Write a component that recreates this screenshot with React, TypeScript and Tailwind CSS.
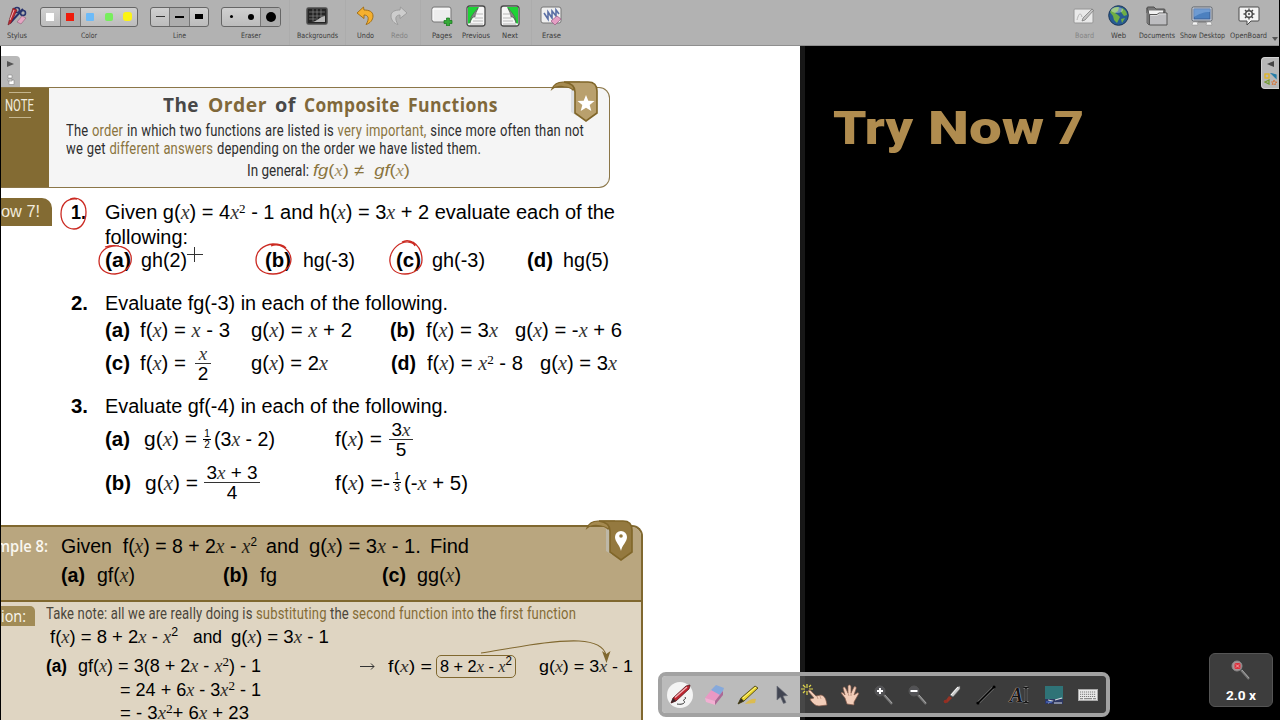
import { useLayoutEffect, useRef, useState } from "react";
import type { ReactNode } from "react";

type BoxProps = { className?: string; children?: ReactNode };

// Stretches one line of text to the width of its box
function Fit({ className = "", children }: BoxProps) {
  const box = useRef<HTMLSpanElement>(null);
  const text = useRef<HTMLSpanElement>(null);
  const [scale, setScale] = useState(1);

  useLayoutEffect(() => {
    if (box.current && text.current && text.current.offsetWidth) {
      setScale(box.current.clientWidth / text.current.getBoundingClientRect().width);
    }
  }, []);

  return (
    <span ref={box} className={`block shrink-0 whitespace-pre ${className}`}>
      <span ref={text} className="inline-block origin-left" style={{ transform: `scaleX(${scale})` }}>
        {children}
      </span>
    </span>
  );
}

function X() {
  return <i className="font-['Liberation_Serif',serif] italic opacity-80">x</i>;
}

function Sq({ bold = false }: { bold?: boolean }) {
  return (
    <span className={bold ? "relative -top-[7px] text-[12px]" : "relative -top-[6px] font-['Liberation_Serif',serif] text-[13px]"}>
      2
    </span>
  );
}

function Row({ className = "", children }: BoxProps) {
  return <div className={`flex items-center ${className}`}>{children}</div>;
}

function Frac({ className = "", top, bottom }: { className?: string; top: ReactNode; bottom: ReactNode }) {
  return (
    <span className={`flex shrink-0 flex-col items-center text-[19px] leading-[19px] ${className}`}>
      <span className="whitespace-pre">{top}</span>
      <span className="h-px w-full bg-[#333]" />
      <span>{bottom}</span>
    </span>
  );
}

function SmallFrac({ className = "", bottom }: { className?: string; bottom: string }) {
  return (
    <span className={`flex w-[8px] shrink-0 flex-col items-center text-[10px] leading-[10px] ${className}`}>
      <span>1</span>
      <span className="h-px w-full bg-black" />
      <span>{bottom}</span>
    </span>
  );
}

function Ribbon({ className = "", fill = "#b9a06d", children }: BoxProps & { fill?: string }) {
  return (
    <svg className={`absolute ${className}`} width="50" height="44" viewBox="0 0 50 44">
      <path d="M21 10v22l6 4V10z" fill="#c3cad0" opacity=".5" />
      <path d="M2 9C4 4 8 2 13 2h16l-6 8c-4-4-16-5-21-1z" fill="#a58a50" stroke="#806629" strokeWidth="1.200" />
      <path d="M14 2h24c6 0 9 3 9 9v22l-11 8-11-8V12c0-6-4-9-11-10z" fill={fill} stroke="#806629" strokeWidth="1.600" />
      {children}
    </svg>
  );
}

function Tool({ className = "", label, labelWidth, dim = false, children }: BoxProps & { label: string; labelWidth: string; dim?: boolean }) {
  return (
    <div className={`flex h-[45px] shrink-0 flex-col items-center ${className}`}>
      <div className="flex h-[31px] items-center justify-center">{children}</div>
      <Fit className={`text-[7.5px] leading-[9px] ${labelWidth} ${dim ? "text-[#858585]" : "text-[#3c3c3c]"}`}>{label}</Fit>
    </div>
  );
}

function Sep({ className = "" }: { className?: string }) {
  return <div className={`h-[45px] w-px shrink-0 bg-[#acacac] ${className}`} />;
}

const group = "mt-[2px] flex h-[20px] overflow-hidden rounded-[3px] border border-[#666] bg-linear-to-b from-[#d0d0d0] to-[#bcbcbc]";
const cell = "flex flex-1 items-center justify-center";

function PageIcon({ flip = false }: { flip?: boolean }) {
  return (
    <svg width="20" height="22" viewBox="0 0 20 22" className={flip ? "-scale-x-100" : ""}>
      <rect x="1" y="1" width="18" height="20" rx="2.5" fill="#f6f6f6" stroke="#4c4c4c" strokeWidth="1.3" />
      <path d="M2 2h11L3.500 18.500H2z" fill="#1ed336" />
      <path d="M10 9h7M9 13h8M7 16h10M4 19h13" stroke="#aaa" strokeWidth=".8" />
      <path d="M12 3c-3 4-8 8-8 15 1-5 2-6 5-6 0-3 2-6 3-9z" fill="#888" stroke="#555" strokeWidth=".6" />
    </svg>
  );
}

function UndoIcon({ redo = false }: { redo?: boolean }) {
  return (
    <svg width="18" height="20" viewBox="0 0 18 20" className={redo ? "-scale-x-100" : ""}>
      <path
        d="M7.500 1 1 7l7 5.500V9c4 0 6 3 2 9.500 4-1 7-4.500 7-8.500 0-4.500-4-6-9-6z"
        fill={redo ? "#cdcdcd" : "#f5b02e"}
        stroke={redo ? "#999" : "#9c6a14"}
        strokeWidth=".9"
        strokeLinejoin="round"
      />
    </svg>
  );
}

function Toolbar() {
  return (
    <header className="flex h-[46px] w-[1279px] border-b border-[#8f8f8f] bg-[#b2b2b2] font-['DejaVu_Sans',sans-serif]">
      <Tool className="w-[34px]" label="Stylus" labelWidth="w-[20px]">
        <svg width="20" height="20" viewBox="0 0 20 20">
          <path d="M3 17 16 3" stroke="#26306c" strokeWidth="2" />
          <circle cx="10" cy="4" r="2.500" fill="none" stroke="#29356f" strokeWidth="1.600" />
          <circle cx="16" cy="7" r="2.500" fill="none" stroke="#29356f" strokeWidth="1.600" />
          <path d="M6 2 10 4 4 17l-3 2 1-4z" fill="#bc2932" stroke="#6b1820" strokeWidth=".6" />
          <path d="m10 16 5-6 4 2-5 6z" fill="#e5a5c2" stroke="#8e6078" strokeWidth=".6" />
          <path d="M7 4 3 14" stroke="#efb8b8" />
        </svg>
      </Tool>
      <Tool className="ml-[6px] w-[98px]" label="Color" labelWidth="w-[16px]">
        <div className={`${group} w-[98px]`}>
          <div className={cell}><i className="size-[8px] bg-white" /></div>
          <div className={`${cell} border-x border-[#777] bg-[#adadad]`}><i className="size-[8px] bg-[#ef1c0c]" /></div>
          <div className={cell}><i className="size-[8px] rounded-[1px] bg-[#6dbbf8]" /></div>
          <div className={cell}><i className="size-[8px] rounded-[2px] bg-[#77ee5c]" /></div>
          <div className={cell}><i className="size-[9px] rounded-[3px] bg-[#fcf414]" /></div>
        </div>
      </Tool>
      <Tool className="ml-[12px] w-[59px]" label="Line" labelWidth="w-[13px]">
        <div className={`${group} w-[59px]`}>
          <div className={cell}><i className="h-px w-[9px] bg-[#333]" /></div>
          <div className={`${cell} border-x border-[#777] bg-[#adadad]`}><i className="h-[2px] w-[9px] bg-black" /></div>
          <div className={cell}><i className="h-[5px] w-[8px] bg-black" /></div>
        </div>
      </Tool>
      <Tool className="ml-[12px] w-[60px]" label="Eraser" labelWidth="w-[20px]">
        <div className={`${group} w-[60px]`}>
          <div className={cell}><i className="size-[3px] rounded-full bg-black" /></div>
          <div className={cell}><i className="size-[6px] rounded-full bg-black" /></div>
          <div className={`${cell} border-l border-[#777] bg-[#adadad]`}><i className="size-[10px] rounded-full bg-black" /></div>
        </div>
      </Tool>
      <Sep className="ml-[8px]" />
      <Tool className="ml-[2px] w-[50px]" label="Backgrounds" labelWidth="w-[41px]">
        <svg width="22" height="18" viewBox="0 0 22 18">
          <rect x="1" y="1" width="20" height="16" rx="1.500" fill="#242424" stroke="#4f4f4f" strokeWidth="1.500" />
          <path d="M3 5h16M3 9h16M3 12h7M7 2v12M11 2v11M15 2v8" stroke="#858585" strokeWidth=".7" />
          <path d="M5 15c6 0 8-5 14-6v6z" fill="#b6b6b6" />
        </svg>
      </Tool>
      <Sep className="ml-[3px]" />
      <Tool className="ml-[2px] w-[34px]" label="Undo" labelWidth="w-[17px]"><UndoIcon /></Tool>
      <Tool className="w-[34px]" label="Redo" labelWidth="w-[17px]" dim><UndoIcon redo /></Tool>
      <Sep className="ml-[4px]" />
      <Tool className="ml-[4px] w-[34px]" label="Pages" labelWidth="w-[20px]">
        <svg width="22" height="20" viewBox="0 0 22 20">
          <rect x="1" y="1" width="19" height="15" rx="2" fill="#ededed" stroke="#767676" />
          <path d="M2 14V3h17" stroke="#fff" fill="none" />
          <path d="M15.500 12h3v2.500H21v3h-2.500V20h-3v-2.500H13v-3h2.500z" fill="#35ab37" stroke="#14731a" strokeWidth=".7" />
        </svg>
      </Tool>
      <Tool className="w-[34px]" label="Previous" labelWidth="w-[28px]"><PageIcon /></Tool>
      <Tool className="w-[34px]" label="Next" labelWidth="w-[16px]"><PageIcon flip /></Tool>
      <Sep className="ml-[4px]" />
      <Tool className="ml-[2px] w-[34px]" label="Erase" labelWidth="w-[19px]">
        <svg width="22" height="20" viewBox="0 0 22 20">
          <rect x="1" y="1" width="20" height="16" rx="2" fill="#efefef" stroke="#767676" />
          <path d="m4 7 4 6 0-7 4 6V5l4 5V4l3 4" fill="none" stroke="#5a6fa5" strokeWidth="1.600" />
          <path d="m11 15 6-5 4 3-6 6z" fill="#e59fc4" stroke="#9a5a86" strokeWidth=".7" />
        </svg>
      </Tool>

      <Tool className="ml-auto w-[34px]" label="Board" labelWidth="w-[19px]" dim>
        <svg width="22" height="18" viewBox="0 0 22 18">
          <rect x="1" y="2" width="19" height="14" rx="1" fill="#e9e9e9" stroke="#969696" />
          <path d="M4 13c2-8 4-7 5-3" fill="none" stroke="#b3b3b3" />
          <path d="m9 14 1-3 9-9 1.500 1.500L12 13z" fill="#c4c4c4" stroke="#727272" strokeWidth=".7" />
        </svg>
      </Tool>
      <Tool className="w-[34px]" label="Web" labelWidth="w-[15px]">
        <svg width="21" height="21" viewBox="0 0 21 21">
          <circle cx="10.500" cy="10.500" r="9.800" fill="#275c93" stroke="#1c3759" />
          <path d="M2 7c2-4 5-5 9-5l-1 4-3 2 3 2 2 2-3 6-3-3-1-4zM14 3c4 2 5 5 5 7l-3 1-3-4zM13 14l4-1-3 5z" fill="#6fae45" />
          <ellipse cx="9" cy="5" rx="6" ry="3" fill="#fff" opacity=".35" />
        </svg>
      </Tool>
      <Tool className="w-[43px]" label="Documents" labelWidth="w-[36px]">
        <svg width="22" height="20" viewBox="0 0 22 20">
          <path d="M1 2q0-1 1-1h6l2 2h8q1 0 1 1v3H1z" fill="#777" stroke="#4f4f4f" />
          <path d="M3 4.500h14V8H3z" fill="#f2f2f2" />
          <path d="M1 2v15l2 2V8z" fill="#8b8b8b" stroke="#555" strokeWidth=".8" />
          <path d="M3.500 8.500H11l2-1.500h8v12H3.500z" fill="#bdbdc0" stroke="#555" />
          <path d="M4.500 9.500H11l2-1.500h7" fill="none" stroke="#e6e6e6" strokeWidth=".8" />
        </svg>
      </Tool>
      <Tool className="w-[48px]" label="Show Desktop" labelWidth="w-[45px]">
        <svg width="22" height="20" viewBox="0 0 22 20">
          <rect x="1" y="1" width="20" height="14" rx="1.500" fill="#d9dde2" stroke="#595f68" />
          <rect x="3" y="3" width="16" height="10" fill="#4c80bf" stroke="#3a5e95" />
          <path d="M3 3h16v3C12 6 8 8 3 11z" fill="#85ade0" opacity=".6" />
          <path d="M2 16h4l1 3H1zM16 16h4l1 3h-6z" fill="#f5f5f5" stroke="#888" strokeWidth=".5" />
          <path d="M7 16h8" stroke="#777" />
        </svg>
      </Tool>
      <Tool className="w-[45px]" label="OpenBoard" labelWidth="w-[37px]">
        <svg width="22" height="21" viewBox="0 0 22 21" className="relative top-px">
          <path d="M2 1h18q1 0 1 1v12q0 1-1 1h-7l-4 4v-4H2q-1 0-1-1V2q0-1 1-1z" fill="#f4f4f4" stroke="#4a4a4a" />
          <circle cx="11" cy="8" r="3.300" fill="none" stroke="#444" strokeWidth="1.400" />
          <circle cx="11" cy="8" r="1" fill="#444" />
          <path d="M11 2.500v2M11 11.500v2M5.500 8h2M14.500 8h2M7 4l1.500 1.500M13.500 10.500 15 12M15 4l-1.500 1.500M8.500 10.500 7 12" stroke="#444" strokeWidth="1.300" />
        </svg>
      </Tool>
      <div className="flex w-[8px] items-end pb-[4px] pl-[1px]">
        <svg width="6" height="4" viewBox="0 0 6 4"><path d="M0 0h6L3 4z" fill="#555" /></svg>
      </div>
    </header>
  );
}

function NoteBox() {
  return (
    <section className="relative mt-[41px] flex h-[101px] w-[609px] rounded-r-[11px] border border-l-0 border-[#8b7648] bg-[#f5f5f5] text-[#2e2e2e]">
      <div className="flex w-[48px] shrink-0 flex-col items-center bg-[#836b33] pt-[4px] pr-[11px] text-[#f2ecdd]">
        <i className="h-px w-[22px] bg-[#c4b58e]" />
        <Fit className="w-[29px] font-['Roboto',sans-serif] text-[17px] leading-[24px]">NOTE</Fit>
        <i className="h-px w-[22px] bg-[#c4b58e]" />
      </div>
      <div className="font-['Roboto',sans-serif] text-[17px]">
        <Row className="mt-[3px] h-[28px] pl-[114px] font-['Open_Sans',sans-serif] text-[20px] font-bold tracking-[.5px] text-[#484848]">
          <Fit className="w-[36px]">The</Fit>
          <Fit className="ml-[9px] w-[59px] text-[#80683a]">Order</Fit>
          <Fit className="ml-[8px] w-[21px]">of</Fit>
          <Fit className="ml-[8px] w-[96px] text-[#80683a]">Composite</Fit>
          <Fit className="ml-[8px] w-[90px] text-[#80683a]">Functions</Fit>
        </Row>
        <Row className="h-[22px] pl-[17px]">
          <Fit className="w-[518px] tracking-[.2px] [word-spacing:.5px]">
            The <span className="text-[#8a743e]">order</span> in which two functions are listed is <span className="text-[#8a743e]">very important,</span> since more often than not
          </Fit>
        </Row>
        <Row className="h-[15px] pl-[17px]">
          <Fit className="w-[415px] tracking-[.2px] [word-spacing:.5px]">
            we get <span className="text-[#8a743e]">different answers</span> depending on the order we have listed them.
          </Fit>
        </Row>
        <Row className="h-[29px] pl-[198px]">
          <Fit className="w-[62px] text-[16px]">In general:</Fit>
          <Fit className="ml-[4px] w-[97px] font-['Liberation_Sans',sans-serif] text-[#8a743e]"><i>fg</i>(<X />) ≠  <i>gf</i>(<X />)</Fit>
        </Row>
      </div>
      <Ribbon className="-top-[8px] left-[549px]">
        <path d="m36 15 2.300 5.700 6.200.4-4.800 3.900 1.600 6-5.300-3.300-5.300 3.300 1.600-6-4.800-3.900 6.200-.4z" fill="#fff" />
      </Ribbon>
    </section>
  );
}

function Questions() {
  return (
    <section>
      <Row className="mt-[10px] h-[28px]">
        <div className="flex h-[28px] w-[51px] shrink-0 items-center rounded-tr-[10px] bg-[#836b33] text-[#f2ecdd]">
          <Fit className="w-[39px] text-[16px]">ow 7!</Fit>
        </div>
        <Fit className="ml-[19px] w-[15px] font-bold">1.</Fit>
        <Fit className="ml-[19px] w-[510px]">Given g(<X />) = 4<X /><Sq /> - 1 and h(<X />) = 3<X /> + 2 evaluate each of the</Fit>
      </Row>
      <Row className="h-[21px] pl-[104px]">
        <Fit className="w-[83px]">following:</Fit>
      </Row>
      <Row className="h-[26px] pl-[104px]">
        <Fit className="w-[26px] font-bold">(a)</Fit>
        <Fit className="ml-[10px] w-[46px]">gh(2)</Fit>
        <Fit className="ml-[78px] w-[26px] font-bold">(b)</Fit>
        <Fit className="ml-[12px] w-[52px]">hg(-3)</Fit>
        <Fit className="ml-[41px] w-[25px] font-bold">(c)</Fit>
        <Fit className="ml-[11px] w-[53px]">gh(-3)</Fit>
        <Fit className="ml-[42px] w-[26px] font-bold">(d)</Fit>
        <Fit className="ml-[10px] w-[46px]">hg(5)</Fit>
      </Row>
      <Row className="mt-[18px] h-[24px] pl-[70px]">
        <Fit className="w-[17px] font-bold">2.</Fit>
        <Fit className="ml-[17px] w-[343px]">Evaluate fg(-3) in each of the following.</Fit>
      </Row>
      <Row className="h-[30px] pl-[104px]">
        <Fit className="w-[25px] font-bold">(a)</Fit>
        <Fit className="ml-[10px] w-[90px]">f(<X />) = <X /> - 3</Fit>
        <Fit className="ml-[21px] w-[101px]">g(<X />) = <X /> + 2</Fit>
        <Fit className="ml-[38px] w-[25px] font-bold">(b)</Fit>
        <Fit className="ml-[11px] w-[72px]">f(<X />) = 3<X /></Fit>
        <Fit className="ml-[17px] w-[107px]">g(<X />) = -<X /> + 6</Fit>
      </Row>
      <Row className="h-[35px] pl-[104px]">
        <Fit className="w-[25px] font-bold">(c)</Fit>
        <Fit className="ml-[10px] w-[46px]">f(<X />) =</Fit>
        <Frac className="ml-[9px] w-[16px] pt-[2px]" top={<X />} bottom="2" />
        <Fit className="ml-[40px] w-[77px]">g(<X />) = 2<X /></Fit>
        <Fit className="ml-[63px] w-[25px] font-bold">(d)</Fit>
        <Fit className="ml-[11px] w-[96px]">f(<X />) = <X /><Sq /> - 8</Fit>
        <Fit className="ml-[17px] w-[77px]">g(<X />) = 3<X /></Fit>
      </Row>
      <Row className="mt-[14px] h-[24px] pl-[70px]">
        <Fit className="w-[17px] font-bold">3.</Fit>
        <Fit className="ml-[17px] w-[343px]">Evaluate gf(-4) in each of the following.</Fit>
      </Row>
      <Row className="h-[42px] pl-[104px]">
        <Fit className="w-[25px] font-bold">(a)</Fit>
        <Fit className="ml-[14px] w-[53px]">g(<X />) =</Fit>
        <SmallFrac className="ml-[6px]" bottom="2" />
        <Fit className="ml-[3px] w-[61px]">(3<X /> - 2)</Fit>
        <Fit className="ml-[60px] w-[47px]">f(<X />) =</Fit>
        <Frac className="ml-[7px] w-[24px]" top={<>3<X /></>} bottom="5" />
      </Row>
      <Row className="h-[45px] pl-[104px]">
        <Fit className="w-[26px] font-bold">(b)</Fit>
        <Fit className="ml-[14px] w-[53px]">g(<X />) =</Fit>
        <Frac className="ml-[6px] w-[56px]" top={<>3<X /> + 3</>} bottom="4" />
        <Fit className="ml-[75px] w-[55px]">f(<X />) =-</Fit>
        <SmallFrac className="ml-[3px]" bottom="3" />
        <Fit className="ml-[3px] w-[64px]">(-<X /> + 5)</Fit>
      </Row>
    </section>
  );
}

function ExampleBox() {
  return (
    <section className="relative mt-[20px] w-[642px] rounded-tr-[11px] border-2 border-b-0 border-l-0 border-[#80682f] bg-[#dfd5c2]">
      <div className="h-[75px] rounded-tr-[9px] border-b-2 border-[#80682f] bg-[#b9a67f] pt-[4px]">
        <Row className="h-[29px]">
          <Fit className="-ml-[5px] w-[52px] font-['Open_Sans',sans-serif] text-[16px] font-semibold text-[#faf7f0]">mple 8:</Fit>
          <Fit className="ml-[13px] w-[196px]">Given  f(<X />) = 8 + 2<X /> - <X /><Sq bold /></Fit>
          <Fit className="ml-[9px] w-[33px]">and</Fit>
          <Fit className="ml-[10px] w-[112px]">g(<X />) = 3<X /> - 1.</Fit>
          <Fit className="ml-[9px] w-[39px]">Find</Fit>
        </Row>
        <Row className="h-[30px] pl-[60px]">
          <Fit className="w-[24px] font-bold">(a)</Fit>
          <Fit className="ml-[12px] w-[38px]">gf(<X />)</Fit>
          <Fit className="ml-[88px] w-[25px] font-bold">(b)</Fit>
          <Fit className="ml-[12px] w-[17px]">fg</Fit>
          <Fit className="ml-[105px] w-[24px] font-bold">(c)</Fit>
          <Fit className="ml-[11px] w-[44px]">gg(<X />)</Fit>
        </Row>
      </div>
      <div className="text-[18px]">
        <Row className="h-[23px] items-start">
          <div className="mt-[4px] flex h-[20px] w-[34px] shrink-0 items-center rounded-tr-[5px] bg-[#a18b56] text-[#faf7f0]">
            <Fit className="w-[25px] font-['Open_Sans',sans-serif] text-[16px]">ion:</Fit>
          </div>
          <Fit className="ml-[11px] w-[530px] font-['Roboto',sans-serif] text-[17px] leading-[22px] tracking-[.2px] text-[#4b463b]">
            Take note: all we are really doing is <span className="text-[#846c36]">substituting</span> the <span className="text-[#846c36]">second function into</span> the <span className="text-[#846c36]">first function</span>
          </Fit>
        </Row>
        <Row className="h-[24px] pl-[49px]">
          <Fit className="w-[128px]">f(<X />) = 8 + 2<X /> - <X /><Sq bold /></Fit>
          <Fit className="ml-[15px] w-[29px]">and</Fit>
          <Fit className="ml-[9px] w-[98px]">g(<X />) = 3<X /> - 1</Fit>
        </Row>
        <Row className="mt-[3px] h-[28px] pl-[45px]">
          <Fit className="w-[21px] font-bold">(a)</Fit>
          <Fit className="ml-[11px] w-[183px]">gf(<X />) = 3(8 + 2<X /> - <X /><Sq />) - 1</Fit>
          <svg className="ml-[99px] w-[15px] shrink-0" height="8" viewBox="0 0 15 8" fill="none" stroke="#333">
            <path d="M0 4.500h14M11 1.500l3 3-3 3" />
          </svg>
          <Fit className="ml-[13px] w-[44px] text-[17px]">f(<X />) =</Fit>
          <span className="ml-[4px] flex h-[23px] w-[80px] items-center justify-center rounded-[5px] border border-[#80682f]">
            <Fit className="w-[72px] text-[17px]">8 + 2<X /> - <X /><Sq bold /></Fit>
          </span>
          <Fit className="ml-[23px] w-[94px] text-[17px]">g(<X />) = 3<X /> - 1</Fit>
        </Row>
        <Row className="h-[20px] pl-[119px]">
          <Fit className="w-[141px]">= 24 + 6<X /> - 3<X /><Sq /> - 1</Fit>
        </Row>
        <Row className="h-[26px] pl-[119px]">
          <Fit className="w-[129px]">= - 3<X /><Sq />+ 6<X /> + 23</Fit>
        </Row>
      </div>
      <Ribbon className="-top-[8px] left-[584px]" fill="#94793f">
        <path d="M36 32c-1-6-6-9-6-14a6 6 0 0 1 12 0c0 5-5 8-6 14z" fill="#fff" />
        <circle cx="36" cy="17" r="1.800" fill="#94793f" />
      </Ribbon>
      {/* arrow from the boxed expression to the x it replaces */}
      <svg className="absolute top-[111px] left-[478px] overflow-visible" width="140" height="30" fill="none">
        <path d="M2 15C45 8 75 2 100 3c18 1 25 6 27 14" stroke="#80682f" strokeWidth="1.100" />
        <path d="m123 13 4.500 12 4-12-4.200 3z" fill="#80682f" />
      </svg>
    </section>
  );
}

// Red pen strokes and the cross cursor
function Ink() {
  return (
    <svg className="absolute top-0 left-0" width="800" height="720" fill="none" stroke="#cb2a22" strokeWidth="1.300">
      <path d="M70 199c9-3 16 3 16 13s-5 17-12 17-13-6-13-15 5-16 16-15" />
      <path d="M105 247c10-3 24-1 26 9 2 11-7 17-16 18-10 0-16-5-16-13 0-9 7-16 20-15" />
      <path d="M271 246c8-4 19 3 20 13 0 9-8 15-18 15-11 0-17-6-17-14 0-9 7-15 17-16 6 0 10 1 13 4" />
      <path d="M402 242c5-3 12-1 13 4-1-4-8-5-13-3-8 3-13 12-12 19 1 8 7 12 15 12 9 0 17-6 17-14 0-9-3-14-9-18" />
      <path d="M187 254.500h16M194.500 247v15" stroke="#333" strokeWidth="1" />
    </svg>
  );
}

function Magnifier({ sign, red = false }: { sign: string; red?: boolean }) {
  return (
    <svg width="20" height="20" viewBox="0 0 20 20">
      <path d="m10 10 8 9" stroke="#777" strokeWidth="2.200" />
      <path d="m11 10 7 8" stroke="#bbb" strokeWidth=".7" />
      <circle cx="6" cy="6" r="5" fill={red ? "#a99295" : "#535356"} stroke={red ? "#898989" : "#555"} />
      {red && <rect x="3.500" y="3" width="6" height="6" rx="1.500" fill="#da313d" />}
      <path d={sign} stroke={red ? "#f3a6ab" : "#fff"} strokeWidth={red ? 1 : 2} />
    </svg>
  );
}

const paletteIcons: ReactNode[] = [
  <span className="flex size-[26px] items-center justify-center rounded-full bg-[#f4f4f4]">
    <svg width="22" height="22" viewBox="0 0 22 22">
      <path d="M8 20c5 1 9-1 7-3s3-1 1-4" fill="none" stroke="#333" />
      <path d="m2 19 2-5L17 2l4-1-1 4L7 17z" fill="#bf2530" stroke="#591b20" strokeWidth=".8" />
      <path d="M6 13.500 18 3" stroke="#f2b4b8" strokeWidth="1.300" />
      <path d="m2 19 2-5 3 3z" fill="#38282a" />
    </svg>
  </span>,
  <svg width="22" height="22" viewBox="0 0 22 22">
    <path d="m2 14 8-10 10 3-8 10z" fill="#ea98c4" />
    <path d="m10 4 3-3 8 3-1 3-3 4-9-5z" fill="#86a9db" />
    <path d="m2 14 10 3v4L3 18z" fill="#f2afd2" />
    <path d="m12 17 8-10v4l-8 10z" fill="#ad6995" />
  </svg>,
  <svg width="22" height="22" viewBox="0 0 22 22">
    <path d="M8 20c3-4 8-6 11-5l-1 4z" fill="#e5bd37" opacity=".8" />
    <path d="m1 20 3-6L18 2l3 2L7 17z" fill="#e9d32b" stroke="#494316" strokeWidth=".9" />
    <path d="M6 14 19 3" stroke="#fff58c" />
    <path d="m1 20 3-6 3 3z" fill="#332e1c" />
  </svg>,
  <svg width="12" height="20" viewBox="0 0 12 20">
    <path d="M1 1v14l3.500-3 3 6.500 2.500-1-3-6.500 4.500-.5z" fill="#414552" stroke="#6b6f79" strokeWidth=".7" />
  </svg>,
  <svg width="28" height="24" viewBox="0 0 28 24" className="relative -left-[2px]">
    <path d="M7 1v4M7 8v4M1 6h4M9 6h4M3 2l2.500 2.500M9 8l2 2M11 2 9 4M3 10l2-2" stroke="#e0d64d" strokeWidth="1.200" />
    <path d="M8 8c1-1.500 3-1 4 1l4 4 5-1c4 1 5 4 6 10l-8 1c-4 0-6-3-8-5l-1-2 4-1z" fill="#f2cdb9" stroke="#875c4a" strokeWidth=".7" />
    <path d="m17 13 1 3M20 13l1 3" stroke="#b88d79" strokeWidth=".7" />
  </svg>,
  <svg width="20" height="22" viewBox="0 0 20 22">
    <path d="M7 20 5 14 1 9c1-1 3 0 4 2L3 4c1-2 2-1 3 1l2 4V2c1-2 3-1 3 1v6l3-6c1-1 3 0 2 2l-2 6 3-2c2-1 2 1 1 2l-4 7v3z" fill="#f2cdb9" stroke="#875c4a" strokeWidth=".7" />
    <path d="m8 9 1 3M11 9v3" stroke="#b88d79" strokeWidth=".8" />
  </svg>,
  <Magnifier sign="M6 3v6M3 6h6" />,
  <Magnifier sign="M2.500 6h7" />,
  <svg width="20" height="22" viewBox="0 0 20 22">
    <path d="m8 11 7-8 3-1v3l-7 8z" fill="#cbcbcb" stroke="#555" strokeWidth=".6" />
    <path d="m9 11 7-8" stroke="#fff" />
    <path d="m7 12 3 2-5 5-1-3z" fill="#973426" />
    <circle cx="3.500" cy="17.500" r="1.800" fill="#952e22" />
  </svg>,
  <svg width="22" height="22" viewBox="0 0 22 22">
    <path d="M3 19 19 3" stroke="#777" strokeWidth="3" />
    <path d="M3 19 19 3" stroke="#000" strokeWidth="1.700" />
    <circle cx="3" cy="19" r="1.600" /><circle cx="19" cy="3" r="1.600" />
  </svg>,
  <span className="flex items-center font-['Liberation_Serif',serif] text-[20px] leading-none font-bold text-[#141414] [text-shadow:0_0_1px_#fff,0_0_1px_#999]">
    <i className="-mr-px">A</i>
    <svg width="8" height="18" viewBox="0 0 8 18" fill="none">
      <path d="M1 1q3 0 3 2v12q0 2-3 2M7 1Q4 1 4 3v12q0 2 3 2" stroke="#999" strokeWidth="2.400" />
      <path d="M1 1q3 0 3 2v12q0 2-3 2M7 1Q4 1 4 3v12q0 2 3 2" stroke="#111" strokeWidth="1.300" />
    </svg>
  </span>,
  <svg width="20" height="20" viewBox="0 0 20 20">
    <rect x="1" y="1" width="18" height="17" fill="#2f7377" />
    <path d="M1 14h18v5H1z" fill="#2d3762" />
    <path d="m4 15 4 1-4 2M11 15l7-2M10 18h8" stroke="#d6dbdf" strokeWidth="1.200" />
    <path d="M2 17h6" stroke="#4160ba" strokeWidth="1.500" />
  </svg>,
  <svg width="20" height="12" viewBox="0 0 20 12">
    <rect x=".5" y=".5" width="19" height="11" fill="#e8e8e8" stroke="#aaa" />
    <path d="M2 3h16M2 5.300h16M2 7.500h16" stroke="#777" strokeDasharray="1.200 .8" />
    <path d="M2 9.700h3M6 9.700h8M15 9.700h3" stroke="#777" />
  </svg>,
];

export default function App() {
  return (
    <div className="relative h-[720px] w-[1280px] overflow-hidden bg-black font-['Liberation_Sans',sans-serif] text-black">
      <Toolbar />
      <div className="flex h-[674px]">
        <main className="w-[800px] shrink-0 overflow-hidden border-l border-black bg-white text-[20px] leading-none">
          <NoteBox />
          <Questions />
          <ExampleBox />
        </main>
        <aside className="flex flex-1 items-start border-l-[5px] border-[#171717] bg-black pt-[56px] pl-[28px] font-['Roboto',sans-serif] text-[46px] leading-[52px] font-black text-[#b08c4f]">
          <Fit className="w-[80px]">Try</Fit>
          <Fit className="ml-[15px] w-[116px]">Now</Fit>
          <Fit className="ml-[10px] w-[30px]">7</Fit>
        </aside>
      </div>
      <Ink />

      {/* side tabs */}
      <div className="absolute top-[56px] left-[1px] flex h-[31px] w-[19px] flex-col items-center gap-[6px] rounded-tr-[4px] bg-[#b8b8b8] pt-[5px]">
        <svg className="shrink-0" width="7" height="7" viewBox="0 0 7 7"><path d="M0 0v6l7-3z" fill="#555" /></svg>
        <svg className="shrink-0" width="8" height="11" viewBox="0 0 8 11">
          <path d="M1 1h4v3H1zM1 5h4v2H1zM2 6h5v4.500H2z" fill="#fff" stroke="#888" strokeWidth=".6" />
        </svg>
      </div>
      <div className="absolute top-[57px] left-[1261px] flex h-[32px] w-[18px] flex-col items-center gap-[5px] rounded-l-[4px] border border-r-0 border-[#d2d2d2] bg-[#b8b8b8] pt-[3px]">
        <svg className="shrink-0" width="7" height="7" viewBox="0 0 7 7"><path d="M7 0v6L0 3z" fill="#444" /></svg>
        <svg className="shrink-0" width="13" height="12" viewBox="0 0 13 12" fill="none" strokeWidth="1.300">
          <rect x="1" y="1" width="4" height="4" stroke="#e2b51f" />
          <path d="m8 1 4 1v3z" fill="#267da8" stroke="#267da8" />
          <path d="m1 9 4-2v4z" stroke="#729b30" />
          <path d="m10 7 1 2 2 .2-2 1 .5 1.800-1.700-1-1.600 1 .4-2L7.500 9 9.300 9z" stroke="#d77235" strokeWidth=".8" />
        </svg>
      </div>

      <div className="absolute top-[672px] left-[658px] flex h-[45px] w-[452px] rounded-[8px] border-4 border-[#a2a2a2] bg-[#787878]/50 bg-clip-padding pl-px">
        {paletteIcons.map((icon, i) => (
          <div key={i} className="flex w-[34px] shrink-0 items-center justify-center">{icon}</div>
        ))}
      </div>

      <div className="absolute top-[653px] left-[1209px] flex h-[54px] w-[64px] flex-col items-center rounded-[6px] border border-[#555] bg-[#3d3d3d] pt-[6px] font-['Roboto',sans-serif] text-white">
        <Magnifier sign="M5 4.500l3 3M8 4.500l-3 3" red />
        <Fit className="mt-[7px] w-[30px] text-[13px] leading-[18px] font-bold">2.0 x</Fit>
      </div>
    </div>
  );
}
